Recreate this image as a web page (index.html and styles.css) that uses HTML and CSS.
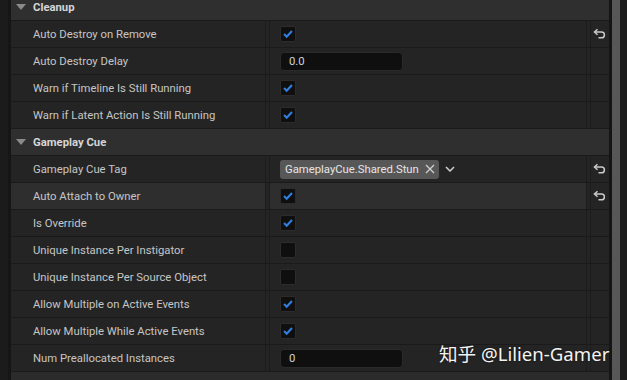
FILE: index.html
```html
<!DOCTYPE html>
<html lang="en">
<head>
  <meta charset="UTF-8">
  <title>Details - Gameplay Cue</title>
  <link rel="stylesheet" href="styles.css">
</head>
<body>
  <div class="editor">
    <div class="gutter"></div>
    <div class="panel">
      <div class="category"><span class="arrow"></span>Cleanup</div>
      <div class="row">
        <div class="name">Auto Destroy on Remove</div>
        <div class="value"><span class="check on"><svg viewBox="0 0 16 16"><path d="M3.5 8 L6.5 11 L12.5 4.5"/></svg></span></div>
        <div class="reset"><svg viewBox="0 0 14 12"><path d="M4.5 1.2 L1.5 4 L4.5 6.8"/><path d="M1.5 4 H8.5 A2.9 2.9 0 0 1 8.5 9.8 H5.5"/></svg></div>
      </div>
      <div class="row">
        <div class="name">Auto Destroy Delay</div>
        <div class="value"><span class="field">0.0</span></div>
        <div class="reset"></div>
      </div>
      <div class="row">
        <div class="name">Warn if Timeline Is Still Running</div>
        <div class="value"><span class="check on"><svg viewBox="0 0 16 16"><path d="M3.5 8 L6.5 11 L12.5 4.5"/></svg></span></div>
        <div class="reset"></div>
      </div>
      <div class="row">
        <div class="name">Warn if Latent Action Is Still Running</div>
        <div class="value"><span class="check on"><svg viewBox="0 0 16 16"><path d="M3.5 8 L6.5 11 L12.5 4.5"/></svg></span></div>
        <div class="reset"></div>
      </div>

      <div class="category"><span class="arrow"></span>Gameplay Cue</div>
      <div class="row">
        <div class="name">Gameplay Cue Tag</div>
        <div class="value">
          <span class="tag">GameplayCue.Shared.Stun<svg class="x" viewBox="0 0 10 10"><path d="M1 1 L9 9 M9 1 L1 9"/></svg></span>
          <svg class="chevron" viewBox="0 0 10 6"><path d="M1 1 L5 5 L9 1"/></svg>
        </div>
        <div class="reset"><svg viewBox="0 0 14 12"><path d="M4.5 1.2 L1.5 4 L4.5 6.8"/><path d="M1.5 4 H8.5 A2.9 2.9 0 0 1 8.5 9.8 H5.5"/></svg></div>
      </div>
      <div class="row hover">
        <div class="name">Auto Attach to Owner</div>
        <div class="value"><span class="check on"><svg viewBox="0 0 16 16"><path d="M3.5 8 L6.5 11 L12.5 4.5"/></svg></span></div>
        <div class="reset"><svg viewBox="0 0 14 12"><path d="M4.5 1.2 L1.5 4 L4.5 6.8"/><path d="M1.5 4 H8.5 A2.9 2.9 0 0 1 8.5 9.8 H5.5"/></svg></div>
      </div>
      <div class="row">
        <div class="name">Is Override</div>
        <div class="value"><span class="check on"><svg viewBox="0 0 16 16"><path d="M3.5 8 L6.5 11 L12.5 4.5"/></svg></span></div>
        <div class="reset"></div>
      </div>
      <div class="row">
        <div class="name">Unique Instance Per Instigator</div>
        <div class="value"><span class="check"></span></div>
        <div class="reset"></div>
      </div>
      <div class="row">
        <div class="name">Unique Instance Per Source Object</div>
        <div class="value"><span class="check"></span></div>
        <div class="reset"></div>
      </div>
      <div class="row">
        <div class="name">Allow Multiple on Active Events</div>
        <div class="value"><span class="check on"><svg viewBox="0 0 16 16"><path d="M3.5 8 L6.5 11 L12.5 4.5"/></svg></span></div>
        <div class="reset"></div>
      </div>
      <div class="row">
        <div class="name">Allow Multiple While Active Events</div>
        <div class="value"><span class="check on"><svg viewBox="0 0 16 16"><path d="M3.5 8 L6.5 11 L12.5 4.5"/></svg></span></div>
        <div class="reset"></div>
      </div>
      <div class="row">
        <div class="name">Num Preallocated Instances</div>
        <div class="value"><span class="field">0</span></div>
        <div class="reset"></div>
      </div>
      <div class="footer"></div>
    </div>
    <div class="scroll"><div class="thumb"></div></div>
  </div>
  <div class="watermark">知乎 @Lilien-Gamer</div>
</body>
</html>
```

FILE: styles.css
```css
body {
  margin: 0;
  background: #1c1c1c;
  font-family: Roboto, "Liberation Sans", sans-serif;
  font-size: 11.3px;
  color: #c6c6c6;
  overflow: hidden;
}
.editor { display: flex; height: 380px; overflow: hidden; }
.gutter {
  width: 11px;
  flex: none;
  background: #1b1b1b;
  box-shadow: inset -3px 0 0 #161616;
}
.panel {
  width: 598px;
  flex: none;
  margin-top: -6px;
  display: flex;
  flex-direction: column;
}
.category {
  height: 26px;
  border-bottom: 1px solid #1a1a1a;
  background: #2f2f2f;
  display: flex;
  align-items: center;
  font-weight: bold;
  color: #d6d6d6;
  flex: none;
}
.arrow {
  width: 0;
  height: 0;
  margin: 0 7px 0 5px;
  border-left: 5px solid transparent;
  border-right: 5px solid transparent;
  border-top: 6px solid #8a8a8a;
}
.row {
  height: 26px;
  display: flex;
  border-bottom: 1px solid #1a1a1a;
  background: #242424;
  flex: none;
}
.row.hover .name, .row.hover .value { background: #2e2e2e; }
.name {
  width: 255px;
  box-sizing: border-box;
  padding-left: 22px;
  border-right: 1px solid #1d1d1d;
  display: flex;
  align-items: center;
  white-space: nowrap;
  overflow: hidden;
}
.value {
  width: 318px;
  box-sizing: border-box;
  margin-left: 3px;
  padding-left: 10px;
  border-left: 1px solid #1d1d1d;
  border-right: 1px solid #1d1d1d;
  display: flex;
  align-items: center;
}
.reset {
  width: 19px;
  box-sizing: border-box;
  margin-left: 3px;
  border-left: 1px solid #1d1d1d;
  display: flex;
  align-items: center;
  justify-content: center;
}
.reset svg { width: 14px; height: 12px; fill: none; stroke: #cacaca; stroke-width: 1.5; }
.check {
  width: 16px;
  height: 16px;
  box-sizing: border-box;
  border-radius: 2px;
  background: #0f0f0f;
  border: 1px solid #2e2b28;
}
.check svg { display: block; width: 14px; height: 14px; fill: none; stroke: #2f80e0; stroke-width: 2.4; }
.field {
  width: 123px;
  height: 19px;
  box-sizing: border-box;
  padding-left: 8px;
  line-height: 17px;
  border-radius: 4px;
  background: #0f0f0f;
  border: 1px solid #2a2a2a;
  color: #d4d4d4;
}
.tag {
  height: 19px;
  padding: 0 4px 0 5px;
  display: flex;
  align-items: center;
  border-radius: 3px;
  background: #575757;
  color: #e6e6e6;
  font-size: 11.3px;
}
.tag .x { width: 10px; height: 10px; margin-left: 6px; fill: none; stroke: #d0d0d0; stroke-width: 1.3; }
.chevron { width: 10px; height: 6px; margin-left: 6px; fill: none; stroke: #d0d0d0; stroke-width: 1.5; }
.footer { flex: 1; background: #2b2b2b; }
.scroll {
  width: 18px;
  flex: none;
  background: #1c1c1c;
  border-left: 3px solid #151515;
}
.thumb { width: 8px; height: 100%; background: #575757; }
.watermark {
  position: absolute;
  left: 439px;
  top: 339px;
  font-family: "Noto Sans", "Noto Sans CJK SC", sans-serif;
  font-size: 18.6px;
  color: #f4f4f4;
  text-shadow: 0 0 2px rgba(0, 0, 0, 0.6);
}
```
